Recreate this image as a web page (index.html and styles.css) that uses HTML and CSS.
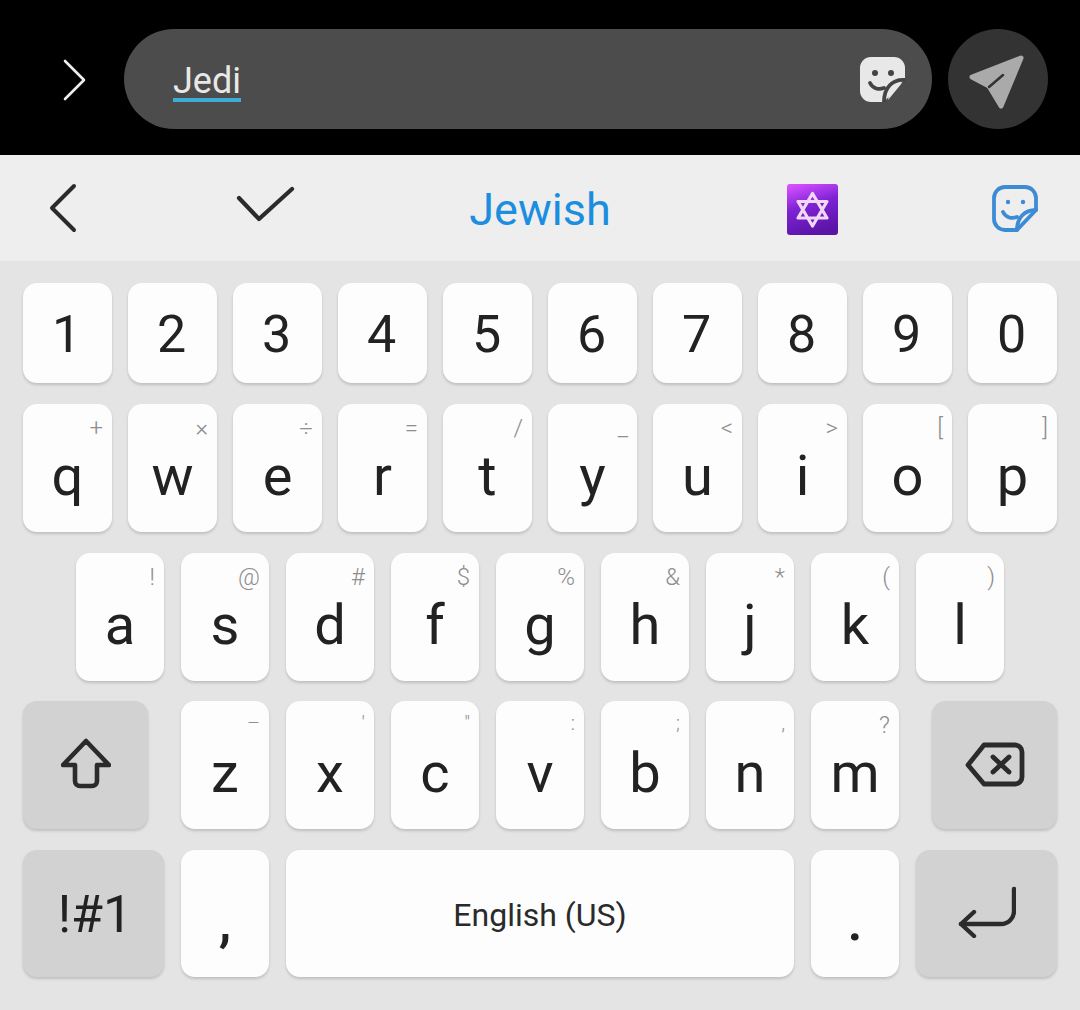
FILE: index.html
```html
<!DOCTYPE html>
<html lang="en">
<head>
    <meta charset="UTF-8">
    <meta name="viewport" content="width=device-width, initial-scale=1.0">
    <title>Keyboard</title>
    <link rel="stylesheet" href="styles.css">
</head>
<body>
    <div class="compose">
        <svg class="compose-toggle" viewBox="0 0 24 42" fill="none" stroke="#eee" stroke-width="2.6" stroke-linecap="round" stroke-linejoin="round"><path d="M3 2 L22 21 L3 40"/></svg>
        <div class="pill">
            <span class="typed">Jedi</span>
            <svg class="pill-sticker" viewBox="0 0 45 45">
                <path d="M11 0 H34 A11 11 0 0 1 45 11 V22 L24 45 H11 A11 11 0 0 1 0 34 V11 A11 11 0 0 1 11 0 Z" fill="#e8e8e8"/>
                <circle cx="15" cy="16" r="3" fill="#444"/>
                <circle cx="31" cy="16" r="3" fill="#444"/>
                <path d="M10 26 C13 32 19 33 24 31" fill="none" stroke="#444" stroke-width="3.8" stroke-linecap="round"/>
                <path d="M45 23 C33 22 24 30 24 45" fill="none" stroke="#444" stroke-width="3.8"/>
                <path d="M28 43 C29 35 33 29 42 26 Z" fill="#e8e8e8"/>
            </svg>
        </div>
        <div class="send">
            <svg viewBox="0 0 100 100">
                <path d="M73 29 L24 48 L41 57 L53 77 Z" fill="#aaa" stroke="#aaa" stroke-width="5" stroke-linejoin="round"/>
                <path d="M41 58 L55 46" fill="none" stroke="#333" stroke-width="2.5" stroke-linecap="round"/>
            </svg>
        </div>
    </div>

    <div class="suggestions">
        <svg class="sug-back" viewBox="0 0 28 50" fill="none" stroke="#2b2b2b" stroke-width="4" stroke-linecap="round" stroke-linejoin="round"><path d="M25 3 L3 25 L25 47"/></svg>
        <svg class="sug-check" viewBox="0 0 60 38" fill="none" stroke="#2b2b2b" stroke-width="4.2" stroke-linecap="round" stroke-linejoin="round"><path d="M4 12 L24 33 L57 3"/></svg>
        <span class="sug-word">Jewish</span>
        <svg class="sug-emoji" viewBox="0 0 51 51">
            <defs>
                <linearGradient id="purple" x1="0.2" y1="0" x2="0.5" y2="1">
                    <stop offset="0" stop-color="#d64fff"/>
                    <stop offset="0.45" stop-color="#7d22d4"/>
                    <stop offset="1" stop-color="#5a14a6"/>
                </linearGradient>
            </defs>
            <rect width="51" height="51" rx="3" fill="url(#purple)"/>
            <path d="M25.5 9.5 L40 34 H11 Z M25.5 42 L11 17.5 H40 Z" fill="none" stroke="#f0d8f5" stroke-width="3.2" stroke-linejoin="round"/>
        </svg>
        <svg class="sug-sticker" viewBox="0 0 46 47" fill="none" stroke="#3d8bd4" stroke-width="3.8" stroke-linecap="round" stroke-linejoin="round">
            <path d="M25 45 H13 A11 11 0 0 1 2 34 V13 A11 11 0 0 1 13 2 H33 A11 11 0 0 1 44 13 V25 Z"/>
            <path d="M44 25 C32 25 25 33 25 45"/>
            <path d="M11 27 C14 33 20 34 25 32"/>
            <circle cx="16" cy="17" r="2.2" fill="#3d8bd4" stroke="none"/>
            <circle cx="31" cy="17" r="2.2" fill="#3d8bd4" stroke="none"/>
        </svg>
    </div>

    <div class="keyboard">
        <div class="row row-numbers">
            <div class="key">1</div>
            <div class="key">2</div>
            <div class="key">3</div>
            <div class="key">4</div>
            <div class="key">5</div>
            <div class="key">6</div>
            <div class="key">7</div>
            <div class="key">8</div>
            <div class="key">9</div>
            <div class="key">0</div>
        </div>
        <div class="row row-top">
            <div class="key letter"><span class="hint">+</span>q</div>
            <div class="key letter"><span class="hint">×</span>w</div>
            <div class="key letter"><span class="hint">÷</span>e</div>
            <div class="key letter"><span class="hint">=</span>r</div>
            <div class="key letter"><span class="hint">/</span>t</div>
            <div class="key letter"><span class="hint">_</span>y</div>
            <div class="key letter"><span class="hint">&lt;</span>u</div>
            <div class="key letter"><span class="hint">&gt;</span>i</div>
            <div class="key letter"><span class="hint">[</span>o</div>
            <div class="key letter"><span class="hint">]</span>p</div>
        </div>
        <div class="row row-middle">
            <div class="key letter"><span class="hint">!</span>a</div>
            <div class="key letter"><span class="hint">@</span>s</div>
            <div class="key letter"><span class="hint">#</span>d</div>
            <div class="key letter"><span class="hint">$</span>f</div>
            <div class="key letter"><span class="hint">%</span>g</div>
            <div class="key letter"><span class="hint">&amp;</span>h</div>
            <div class="key letter"><span class="hint">*</span>j</div>
            <div class="key letter"><span class="hint">(</span>k</div>
            <div class="key letter"><span class="hint">)</span>l</div>
        </div>
        <div class="row row-bottom">
            <div class="key action shift">
                <svg class="icon-shift" viewBox="0 0 50 51" fill="none" stroke="#2b2b2b" stroke-width="4.6" stroke-linejoin="round"><path d="M25 3 L48 27 H36 V43 A5 5 0 0 1 31 48 H19 A5 5 0 0 1 14 43 V27 H2 Z"/></svg>
            </div>
            <div class="key letter"><span class="hint hint-small">–</span>z</div>
            <div class="key letter"><span class="hint hint-small">'</span>x</div>
            <div class="key letter"><span class="hint hint-small">"</span>c</div>
            <div class="key letter"><span class="hint hint-small">:</span>v</div>
            <div class="key letter"><span class="hint hint-small">;</span>b</div>
            <div class="key letter"><span class="hint hint-small">,</span>n</div>
            <div class="key letter"><span class="hint">?</span>m</div>
            <div class="key action backspace">
                <svg class="icon-backspace" viewBox="0 0 60 45" fill="none" stroke="#2b2b2b" stroke-width="4.8" stroke-linecap="round" stroke-linejoin="round">
                    <path d="M19 3 H50 A7 7 0 0 1 57 10 V35 A7 7 0 0 1 50 42 H19 L3 23 Z"/>
                    <path d="M28 15 L44 30 M44 15 L28 30"/>
                </svg>
            </div>
        </div>
        <div class="row row-space">
            <div class="key action symbols">!#1</div>
            <div class="key letter punct">,</div>
            <div class="key spacebar">English (US)</div>
            <div class="key letter punct">.</div>
            <div class="key action enter">
                <svg class="icon-enter" viewBox="0 0 58 52" fill="none" stroke="#2b2b2b" stroke-width="4.4" stroke-linecap="round" stroke-linejoin="round">
                    <path d="M56 3 V25 A13 13 0 0 1 43 38 H3"/>
                    <path d="M16 26 L3 38 L16 50"/>
                </svg>
            </div>
        </div>
    </div>
</body>
</html>
```

FILE: styles.css
```css
* {
    box-sizing: border-box;
}

body {
    margin: 0;
    font-family: Roboto, "Liberation Sans", sans-serif;
    background-color: #e4e4e4;
    color: #222;
}

.compose {
    display: flex;
    height: 155px;
    padding: 29px 32px 0 62px;
    background-color: #000;
}

.compose-toggle {
    width: 24px;
    height: 42px;
    margin: 30px 38px 0 0;
}

.pill {
    display: flex;
    align-items: center;
    justify-content: space-between;
    width: 808px;
    height: 100px;
    padding: 0 27px 0 49px;
    border-radius: 50px;
    background-color: #4c4c4c;
}

.typed {
    margin-top: 8px;
    border-bottom: 4px solid #3dacd6;
    color: #e8e8e8;
    font-size: 36px;
    line-height: 34px;
}

.pill-sticker {
    width: 45px;
    height: 45px;
}

.send {
    width: 100px;
    height: 100px;
    margin-left: 16px;
    border-radius: 50%;
    background-color: #333;
}

.suggestions {
    display: grid;
    grid-template-columns: 126px 278px 272px 273px 131px;
    align-items: center;
    justify-items: center;
    height: 106px;
    background-color: #eee;
}

.sug-back {
    width: 28px;
    height: 50px;
}

.sug-check {
    width: 60px;
    height: 38px;
    margin-bottom: 6px;
}

.sug-word {
    padding-top: 3px;
    color: #1c8ee0;
    font-size: 45px;
}

.sug-emoji {
    width: 51px;
    height: 51px;
    margin-top: 2px;
}

.sug-sticker {
    width: 46px;
    height: 47px;
}

.keyboard {
    display: flex;
    flex-direction: column;
    padding: 22px 23px 0;
}

.row {
    display: flex;
    gap: 17px;
    margin-bottom: 21px;
}

.key {
    position: relative;
    display: flex;
    align-items: center;
    justify-content: center;
    width: 88px;
    height: 128px;
    border-radius: 14px;
    background-color: #fdfdfd;
    box-shadow: 0 2px 3px rgba(0, 0, 0, 0.16);
    font-size: 52px;
}

.row-numbers,
.row-top {
    gap: 16px;
}

.row-numbers .key,
.row-top .key {
    width: 89px;
}

.row-numbers .key {
    height: 100px;
    padding: 2px 2px 0 0;
}

.row-middle {
    margin-bottom: 20px;
    padding-left: 53px;
}

.row-space .key {
    height: 127px;
}

.letter {
    padding-top: 16px;
    font-size: 56px;
}

.hint {
    position: absolute;
    top: 10px;
    right: 9px;
    color: #8e8e8e;
    font-size: 24px;
    font-weight: 300;
}

.hint-small {
    font-size: 20px;
}

.action {
    background-color: #d2d2d2;
}

.shift,
.backspace {
    width: 125px;
}

.shift {
    margin-right: 16px;
}

.backspace {
    margin-left: 16px;
}

.icon-shift {
    width: 50px;
    height: 51px;
    margin-bottom: 3px;
}

.icon-backspace {
    width: 60px;
    height: 45px;
    margin-bottom: 1px;
}

.symbols,
.enter {
    width: 141px;
}

.symbols {
    padding: 2px 0 0 3px;
    font-size: 52px;
}

.row-space .punct {
    padding-top: 14px;
    font-size: 56px;
    font-weight: 500;
}

.spacebar {
    width: 508px;
    padding-top: 2px;
    color: #2a2a2a;
    font-size: 32px;
}

.icon-enter {
    width: 58px;
    height: 52px;
    margin-bottom: 3px;
}
```
